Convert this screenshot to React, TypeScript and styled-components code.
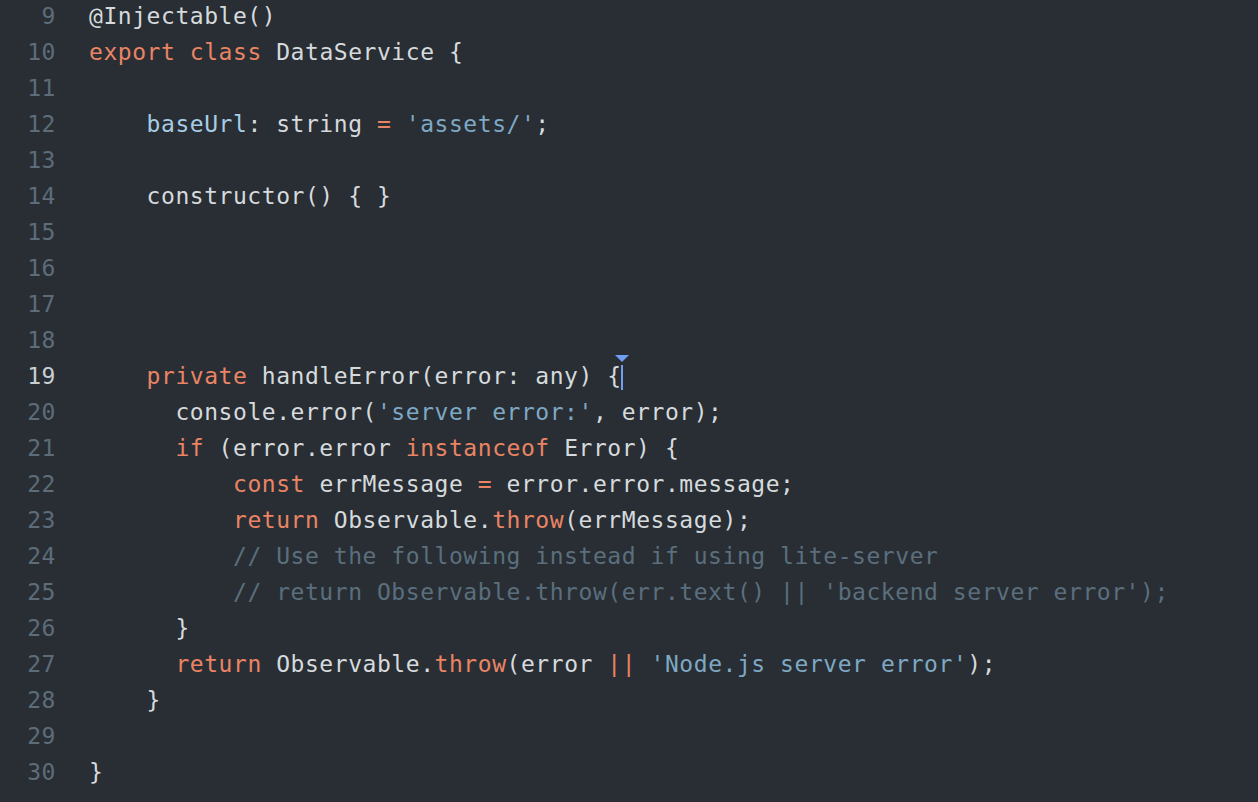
import React from "react";
import styled, { createGlobalStyle } from "styled-components";

const Global = createGlobalStyle`
  html, body { margin: 0; padding: 0; background: #282e33; }
  body { overflow: hidden; }
`;

const Editor = styled.div`
  width: 1258px;
  height: 802px;
  background: #282e33;
  overflow: hidden;
  font-family: "DejaVu Sans Mono", "Liberation Mono", monospace;
  font-size: 23px;
  letter-spacing: 0.55px;
  color: #d6dadd;
`;

const Lines = styled.div`
  margin-top: -2px;
  display: flex;
  flex-direction: column;
`;

const Row = styled.div`
  display: flex;
  height: 36px;
  line-height: 36px;
  white-space: pre;
`;

const Gutter = styled.div<{ $active?: boolean }>`
  width: 56px;
  text-align: right;
  padding-right: 33px;
  flex: none;
  color: ${(p) => (p.$active ? "#c9ced3" : "#5d6c79")};
`;

const Code = styled.div`
  position: relative;
  flex: 1;
`;

const K = styled.span`color: #ea8465;`;
const S = styled.span`color: #7ea8c4;`;
const P = styled.span`color: #a6cce6;`;
const C = styled.span`color: #5b6e7e;`;

const CursorWrap = styled.span`
  position: relative;
  display: inline-block;
  width: 0;
  height: 36px;
  vertical-align: top;
`;

const Caret = styled.span`
  position: absolute;
  left: -1px;
  top: 7px;
  width: 2px;
  height: 25px;
  background: #6f9ef2;
`;

const Marker = styled.span`
  position: absolute;
  left: -7px;
  top: -3px;
  width: 0;
  height: 0;
  border-left: 7px solid transparent;
  border-right: 7px solid transparent;
  border-top: 7px solid #6f9ef2;
`;

const Cursor = () => (
  <CursorWrap>
    <Marker />
    <Caret />
  </CursorWrap>
);

const lines: { n: number; c: React.ReactNode; active?: boolean }[] = [
  { n: 9, c: <>@Injectable()</> },
  { n: 10, c: <><K>export</K> <K>class</K> DataService {"{"}</> },
  { n: 11, c: <></> },
  { n: 12, c: <>{"    "}<P>baseUrl</P>: string <K>=</K> <S>'assets/'</S>;</> },
  { n: 13, c: <></> },
  { n: 14, c: <>{"    "}constructor() {"{ }"}</> },
  { n: 15, c: <></> },
  { n: 16, c: <></> },
  { n: 17, c: <></> },
  { n: 18, c: <></> },
  {
    n: 19,
    active: true,
    c: <>{"    "}<K>private</K> handleError(error: any) {"{"}<Cursor /></>,
  },
  { n: 20, c: <>{"      "}console.error(<S>'server error:'</S>, error);</> },
  { n: 21, c: <>{"      "}<K>if</K> (error.error <K>instanceof</K> Error) {"{"}</> },
  { n: 22, c: <>{"          "}<K>const</K> errMessage <K>=</K> error.error.message;</> },
  { n: 23, c: <>{"          "}<K>return</K> Observable.<K>throw</K>(errMessage);</> },
  { n: 24, c: <>{"          "}<C>// Use the following instead if using lite-server</C></> },
  {
    n: 25,
    c: <>{"          "}<C>// return Observable.throw(err.text() || 'backend server error');</C></>,
  },
  { n: 26, c: <>{"      "}{"}"}</> },
  {
    n: 27,
    c: <>{"      "}<K>return</K> Observable.<K>throw</K>(error <K>||</K> <S>'Node.js server error'</S>);</>,
  },
  { n: 28, c: <>{"    "}{"}"}</> },
  { n: 29, c: <></> },
  { n: 30, c: <>{"}"}</> },
];

export default function App() {
  return (
    <>
      <Global />
      <Editor>
        <Lines>
          {lines.map((l) => (
            <Row key={l.n}>
              <Gutter $active={l.active}>{l.n}</Gutter>
              <Code>{l.c}</Code>
            </Row>
          ))}
        </Lines>
      </Editor>
    </>
  );
}
